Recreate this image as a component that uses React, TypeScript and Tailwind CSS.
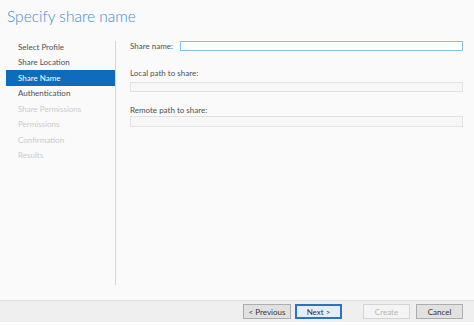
import React from "react";

const steps = [
  { label: "Select Profile", state: "done" },
  { label: "Share Location", state: "done" },
  { label: "Share Name", state: "active" },
  { label: "Authentication", state: "done" },
  { label: "Share Permissions", state: "off" },
  { label: "Permissions", state: "off" },
  { label: "Confirmation", state: "off" },
  { label: "Results", state: "off" },
];

export default function App() {
  return (
    <div
      className="flex h-[325px] w-[474px] flex-col overflow-hidden bg-[#fafafa] text-[8px] text-[#505050]"
      style={{ fontFamily: 'Lato, "Open Sans", sans-serif' }}
    >
      <h1 className="h-[39px] pl-[7px] pt-[4px] text-[15.5px] font-light leading-[24px] text-[#3f8bcc]">
        Specify share name
      </h1>

      <div className="flex h-[261px]">
        {/* wizard steps */}
        <div className="w-[115px] shrink-0 pl-[6px]">
          {steps.map((s) => (
            <div
              key={s.label}
              className={
                s.state === "active"
                  ? "flex h-[15.5px] items-center bg-[#0f6cbd] pl-[12px] text-white"
                  : s.state === "done"
                    ? "flex h-[15.5px] items-center pl-[12px] text-[#505050]"
                    : "flex h-[15.5px] items-center pl-[12px] text-[#cbcbcb]"
              }
            >
              {s.label}
            </div>
          ))}
        </div>

        <div className="mt-[2px] h-[244px] w-px shrink-0 bg-[#d6d6d6]" />

        {/* form */}
        <div className="flex-1 pl-[14px] pr-[11px] pt-[2px]">
          <div className="flex h-[10px] items-center">
            <span className="w-[50px] shrink-0">Share name:</span>
            <div className="h-[10px] flex-1 border border-[#8fbde8] bg-white" />
          </div>

          <div className="mt-[17px] leading-[10px]">Local path to share:</div>
          <div className="mt-[4px] h-[10px] border border-[#e2e2e2] bg-[#f7f7f7]" />

          <div className="mt-[13px] leading-[10px]">Remote path to share:</div>
          <div className="mt-[1px] h-[11px] border border-[#e2e2e2] bg-[#f7f7f7]" />
        </div>
      </div>

      <div className="flex h-[22px] items-center justify-end border-t border-[#dedede] bg-[#efefef] pr-[11px]">
        <button className="flex h-[15px] w-[48px] items-center justify-center border border-[#adadad] bg-[#e1e1e1] text-[#333]">
          &lt; Previous
        </button>
        <button className="ml-[4px] flex h-[15px] w-[47px] items-center justify-center border-2 border-[#2b73c0] bg-[#e5eef8] text-[#333]">
          Next &gt;
        </button>
        <button className="ml-[21px] flex h-[15px] w-[47px] items-center justify-center border border-[#d4d4d4] bg-[#f4f4f4] text-[#b5b5b5]">
          Create
        </button>
        <button className="ml-[6px] flex h-[15px] w-[47px] items-center justify-center border border-[#adadad] bg-[#e1e1e1] text-[#333]">
          Cancel
        </button>
      </div>
      <div className="h-[3px] bg-white" />
    </div>
  );
}
